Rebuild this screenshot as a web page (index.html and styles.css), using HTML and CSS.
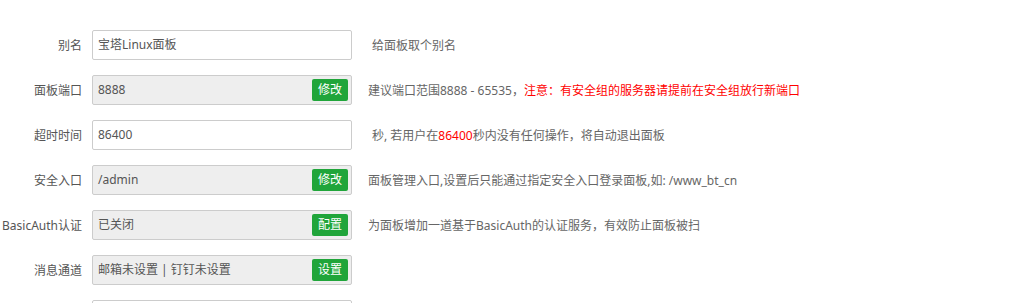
FILE: index.html
```html
<!DOCTYPE html>
<html>
<head>
    <title>面板设置</title>
    <link rel="stylesheet" href="styles.css">
</head>
<body>
    <div class="config-form">
        <!-- 别名 -->
        <div class="line">
            <span class="tname">别名</span>
            <div class="info-r">
                <div class="bt-input">宝塔Linux面板</div>
            </div>
            <span class="tips pad">给面板取个别名</span>
        </div>

        <!-- 面板端口 -->
        <div class="line">
            <span class="tname">面板端口</span>
            <div class="info-r">
                <div class="bt-input disabled">8888</div>
                <button class="btn-green">修改</button>
            </div>
            <span class="tips">建议端口范围8888 - 65535，<span class="red">注意：有安全组的服务器请提前在安全组放行新端口</span></span>
        </div>

        <!-- 超时时间 -->
        <div class="line">
            <span class="tname">超时时间</span>
            <div class="info-r">
                <div class="bt-input">86400</div>
            </div>
            <span class="tips pad">秒, 若用户在<span class="red">86400</span>秒内没有任何操作，将自动退出面板</span>
        </div>

        <!-- 安全入口 -->
        <div class="line">
            <span class="tname">安全入口</span>
            <div class="info-r">
                <div class="bt-input disabled">/admin</div>
                <button class="btn-green">修改</button>
            </div>
            <span class="tips">面板管理入口,设置后只能通过指定安全入口登录面板,如: /www_bt_cn</span>
        </div>

        <!-- BasicAuth -->
        <div class="line">
            <span class="tname">BasicAuth认证</span>
            <div class="info-r">
                <div class="bt-input disabled">已关闭</div>
                <button class="btn-green">配置</button>
            </div>
            <span class="tips">为面板增加一道基于BasicAuth的认证服务，有效防止面板被扫</span>
        </div>

        <!-- 消息通道 -->
        <div class="line">
            <span class="tname">消息通道</span>
            <div class="info-r">
                <div class="bt-input disabled">邮箱未设置 | 钉钉未设置</div>
                <button class="btn-green">设置</button>
            </div>
        </div>

        <div class="line">
            <span class="tname"></span>
            <div class="info-r">
                <div class="bt-input"></div>
            </div>
        </div>
    </div>
</body>
</html>
```

FILE: styles.css
```css
body {
    margin: 0;
    background-color: #fff;
    font-family: "Noto Sans", "Noto Sans CJK SC", sans-serif;
    font-size: 12px;
    color: #555;
    overflow: hidden;
}
.config-form {
    padding-top: 30px;
}
.line {
    display: flex;
    align-items: center;
    height: 30px;
    margin-bottom: 15px;
}
.tname {
    width: 82px;
    margin-right: 10px;
    text-align: right;
    white-space: nowrap;
    color: #555;
    flex-shrink: 0;
}
.info-r {
    position: relative;
    width: 260px;
    height: 30px;
    flex-shrink: 0;
}
.bt-input {
    box-sizing: border-box;
    width: 260px;
    height: 30px;
    line-height: 28px;
    padding: 0 5px;
    border: 1px solid #ccc;
    border-radius: 2px;
    background-color: #fff;
    color: #555;
    white-space: nowrap;
}
.bt-input.disabled {
    background-color: #eee;
}
.btn-green {
    position: absolute;
    top: 4px;
    right: 4px;
    width: 36px;
    height: 22px;
    padding: 0;
    border: none;
    border-radius: 2px;
    background-color: #20a53a;
    color: #fff;
    font-family: inherit;
    font-size: 12px;
    line-height: 22px;
    cursor: pointer;
}
.tips {
    margin-left: 16px;
    color: #666;
    white-space: nowrap;
}
.tips.pad {
    margin-left: 20px;
}
.red {
    color: #f00;
}
```
